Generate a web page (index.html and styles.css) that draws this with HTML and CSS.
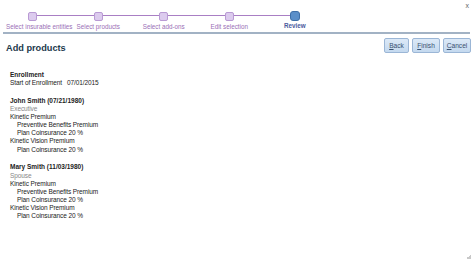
FILE: index.html
```html
<!DOCTYPE html>
<html>
<head>
<meta charset="utf-8">
<link rel="stylesheet" href="styles.css">
</head>
<body>
<div class="dialog">
  <div class="close">x</div>
  <div class="stepper">
    <div class="track"></div>
    <div class="step first"><span class="dot"></span><span class="label">Select insurable entities</span></div>
    <div class="step"><span class="dot"></span><span class="label">Select products</span></div>
    <div class="step"><span class="dot"></span><span class="label">Select add-ons</span></div>
    <div class="step"><span class="dot"></span><span class="label">Edit selection</span></div>
    <div class="step current"><span class="dot"></span><span class="label">Review</span></div>
  </div>
  <div class="divider"></div>
  <div class="header">
    <h1 class="title">Add products</h1>
    <div class="buttons">
      <button class="btn back"><u>B</u>ack</button>
      <button class="btn finish"><u>F</u>inish</button>
      <button class="btn cancel"><u>C</u>ancel</button>
    </div>
  </div>
  <div class="content">
    <div class="block">
      <div class="bold">Enrollment</div>
      <div>Start of Enrollment&nbsp;&nbsp; 07/01/2015</div>
    </div>
    <div class="block">
      <div class="bold">John Smith (07/21/1980)</div>
      <div class="muted">Executive</div>
      <div>Kinetic Premium</div>
      <div class="ind">Preventive Benefits Premium</div>
      <div class="ind">Plan Coinsurance 20 %</div>
      <div>Kinetic Vision Premium</div>
      <div class="ind">Plan Coinsurance 20 %</div>
    </div>
    <div class="block">
      <div class="bold">Mary Smith (11/03/1980)</div>
      <div class="muted">Spouse</div>
      <div>Kinetic Premium</div>
      <div class="ind">Preventive Benefits Premium</div>
      <div class="ind">Plan Coinsurance 20 %</div>
      <div>Kinetic Vision Premium</div>
      <div class="ind">Plan Coinsurance 20 %</div>
    </div>
  </div>
  <div class="grip"></div>
</div>
</body>
</html>
```

FILE: styles.css
```css
html, body {
  margin: 0;
  padding: 0;
  background: #ffffff;
}
.dialog {
  position: relative;
  width: 474px;
  height: 262px;
  box-sizing: border-box;
  font-family: "Liberation Sans", Arial, sans-serif;
  color: #222;
  overflow: hidden;
}
.close {
  position: absolute;
  top: 2px;
  right: 5px;
  font-family: "Liberation Sans", Arial, sans-serif;
  font-size: 7px;
  color: #666;
}
.stepper {
  position: relative;
  display: grid;
  grid-template-columns: repeat(5, 65.5px);
  padding-top: 12px;
  height: 20px;
}
.track {
  position: absolute;
  left: 32px;
  width: 262px;
  top: 15px;
  height: 1px;
  background: #a97fc4;
}
.step {
  position: relative;
  display: flex;
  flex-direction: column;
  align-items: center;
}
.dot {
  position: relative;
  width: 7px;
  height: 7px;
  border: 1px solid #b99ad4;
  background: #dccbee;
  border-radius: 2px;
}
.step.current .dot {
  width: 8px;
  height: 8px;
  margin-top: -1px;
  background: #5b8fc9;
  border-color: #3f6fa8;
  border-radius: 3px;
}
.label {
  margin-top: 2px;
  font-family: "Liberation Sans", Arial, sans-serif;
  font-size: 6.3px;
  color: #9a6fb6;
  white-space: nowrap;
}
.step.first .label {
  align-self: flex-start;
  margin-left: 6px;
}
.step.current .label {
  color: #4b5b9e;
  font-weight: bold;
  margin-top: 1px;
}
.divider {
  margin: 0 4px 0 3px;
  height: 2px;
  background: #a2b2c4;
}
.header {
  display: flex;
  justify-content: space-between;
  align-items: flex-start;
  padding: 4px 3px 0 6px;
}
.title {
  margin: 5px 0 0 0;
  font-family: "Liberation Sans", Arial, sans-serif;
  font-size: 9.2px;
  font-weight: bold;
  color: #1d3a4c;
}
.buttons {
  display: flex;
  gap: 3px;
}
.btn {
  font-family: "Liberation Sans", Arial, sans-serif;
  font-size: 6.6px;
  color: #3a5170;
  height: 15px;
  padding: 0;
  border: 1px solid #9bb6d6;
  border-radius: 2px;
  background: linear-gradient(#dce9f7, #c4d9ef);
}
.btn.back { width: 25px; }
.btn.finish { width: 28px; }
.btn.cancel { width: 28px; }
.content {
  padding: 18px 0 0 10px;
  font-size: 6.5px;
  letter-spacing: -0.1px;
  line-height: 8.1px;
  color: #222;
}
.block {
  margin-bottom: 9.8px;
}
.bold {
  font-weight: bold;
  letter-spacing: 0;
}
.muted {
  color: #888;
}
.ind {
  padding-left: 7px;
}
.grip {
  position: absolute;
  right: 3px;
  bottom: 3px;
  width: 5px;
  height: 5px;
  background: linear-gradient(135deg, transparent 50%, #c8c8c8 50%);
}
```
